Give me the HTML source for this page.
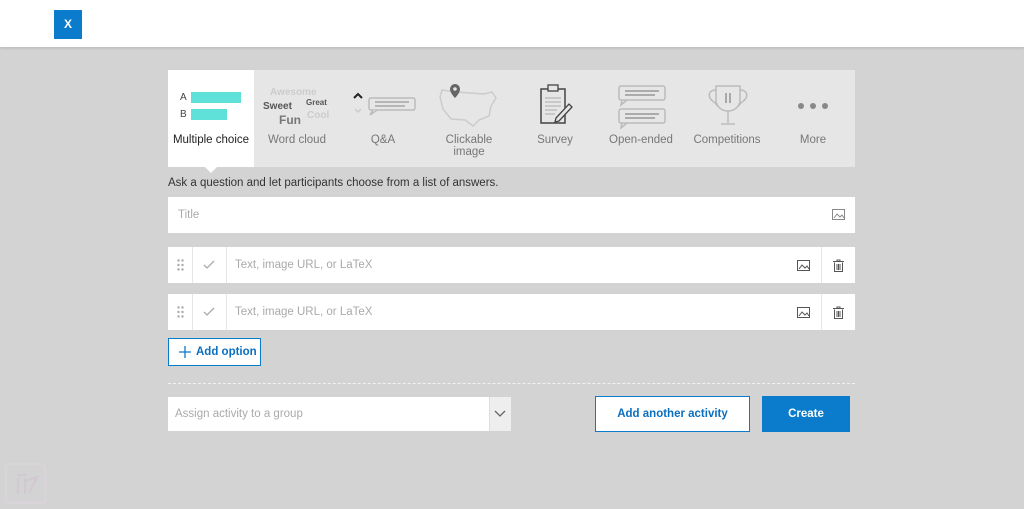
<!DOCTYPE html>
<html><head><style>
*{box-sizing:border-box;margin:0;padding:0}
body{width:1024px;height:509px;background:#d3d3d3;font-family:"Liberation Sans",sans-serif;position:relative;overflow:hidden}
.top{position:absolute;left:0;top:0;width:1024px;height:47px;background:#fff;box-shadow:0 1px 3px rgba(0,0,0,.15)}
.x{position:absolute;left:54px;top:10px;width:28px;height:29px;background:#0b7bcc;color:#fff;font-size:12px;font-weight:bold;text-align:center;line-height:29px}
.tabs{position:absolute;left:168px;top:70px;width:687px;height:97px;background:#e6e6e6}
.tab{position:absolute;top:0;width:86px;height:97px;text-align:center;font-size:11.5px;color:#777}
.tab .l{position:absolute;left:0;right:0;top:64px;line-height:12px}
.sel{background:#fff;color:#222}
.abs{position:absolute}
.desc{position:absolute;left:168px;top:177px;font-size:11.5px;color:#333}
.inp{position:absolute;left:168px;width:687px;height:36px;background:#fff;font-size:11.5px;color:#aaa}
.btn{position:absolute;font-size:11.5px;font-weight:bold;text-align:center}
</style></head><body>
<div class="top"><div class="x">X</div></div>
<div class="tabs">
 <div class="tab sel" style="left:0">
  <div class="abs" style="left:12px;top:22px;font-size:10px;color:#444">A</div>
  <div class="abs" style="left:23px;top:22px;width:50px;height:11px;background:#5fe1da"></div>
  <div class="abs" style="left:12px;top:39px;font-size:10px;color:#444">B</div>
  <div class="abs" style="left:23px;top:39px;width:36px;height:11px;background:#5fe1da"></div>
  <div class="l">Multiple choice</div>
 </div>
 <div class="tab" style="left:86px">
  <div class="abs" style="left:16px;top:17px;font-size:10px;font-weight:bold;color:#ccc">Awesome</div>
  <div class="abs" style="left:9px;top:31px;font-size:10px;font-weight:bold;color:#555">Sweet</div>
  <div class="abs" style="left:52px;top:28px;font-size:8px;font-weight:bold;color:#555">Great</div>
  <div class="abs" style="left:53px;top:40px;font-size:10px;font-weight:bold;color:#ccc">Cool</div>
  <div class="abs" style="left:25px;top:43px;font-size:12px;font-weight:bold;color:#777">Fun</div>
  <div class="l">Word cloud</div>
 </div>
 <div class="tab" style="left:172px">
  <svg class="abs" style="left:8px;top:22px" width="70" height="30"><path d="M6 6l4-4 4 4" stroke="#222" stroke-width="2" fill="none"/><path d="M7 17l3 3 3-3" stroke="#ccc" stroke-width="1.5" fill="none"/><rect x="21" y="6" width="46" height="12" rx="2" fill="none" stroke="#bbb" stroke-width="1.5"/><path d="M25 18l-3 5 7-5" fill="#e6e6e6" stroke="#bbb" stroke-width="1.5"/><path d="M27 10h34M27 14h30" stroke="#999" stroke-width="1.3"/></svg>
  <div class="l">Q&amp;A</div>
 </div>
 <div class="tab" style="left:258px">
  <svg class="abs" style="left:12px;top:12px" width="62" height="46"><path d="M4 8l14 2 28 2 8-2 4 6-5 8-2 10-10 4-6 6-8-6-14-1-8-10-3-12z" fill="none" stroke="#ccc" stroke-width="1.5"/><path d="M17 2a5 5 0 0 1 5 5c0 4-5 9-5 9s-5-5-5-9a5 5 0 0 1 5-5z" fill="#666"/><circle cx="17" cy="7" r="1.8" fill="#e6e6e6"/></svg>
  <div class="l">Clickable<br>image</div>
 </div>
 <div class="tab" style="left:344px">
  <svg class="abs" style="left:26px;top:14px" width="40" height="44"><rect x="3" y="5" width="24" height="34" fill="none" stroke="#444" stroke-width="1.5"/><rect x="10" y="1" width="10" height="6" fill="#e6e6e6" stroke="#444" stroke-width="1.3"/><path d="M7 14h16M7 18h16M7 22h16M7 26h12M7 30h10" stroke="#aaa"/><path d="M18 34l13-14 3 3-13 14-4 1z" fill="#e6e6e6" stroke="#444" stroke-width="1.3"/></svg>
  <div class="l">Survey</div>
 </div>
 <div class="tab" style="left:430px">
  <svg class="abs" style="left:19px;top:15px" width="50" height="44"><rect x="2" y="1" width="46" height="14" rx="2" fill="none" stroke="#bbb" stroke-width="1.5"/><path d="M5 15l-1 5 6-5" fill="none" stroke="#bbb" stroke-width="1.5"/><path d="M8 6h34M8 10h30" stroke="#888" stroke-width="1.3"/><rect x="2" y="24" width="46" height="14" rx="2" fill="none" stroke="#bbb" stroke-width="1.5"/><path d="M5 38l-1 5 6-5" fill="none" stroke="#bbb" stroke-width="1.5"/><path d="M8 29h34M8 33h30" stroke="#888" stroke-width="1.3"/></svg>
  <div class="l">Open-ended</div>
 </div>
 <div class="tab" style="left:516px">
  <svg class="abs" style="left:22px;top:14px" width="44" height="44"><path d="M10 2h24v14c0 6-5 11-12 11s-12-5-12-11z" fill="none" stroke="#bbb" stroke-width="1.5"/><path d="M10 6c-6 0-8 4-6 8s6 4 7 8M34 6c6 0 8 4 6 8s-6 4-7 8M22 27v12M15 40h14" fill="none" stroke="#bbb" stroke-width="1.5"/><path d="M20 9v10M24 9v10" stroke="#888" stroke-width="1.3"/></svg>
  <div class="l">Competitions</div>
 </div>
 <div class="tab" style="left:602px">
  <svg class="abs" style="left:26px;top:31px" width="36" height="10"><circle cx="5" cy="5" r="3" fill="#888"/><circle cx="17" cy="5" r="3" fill="#888"/><circle cx="29" cy="5" r="3" fill="#888"/></svg>
  <div class="l">More</div>
 </div>
</div>
<div class="abs" style="left:205px;top:167px;width:0;height:0;border-left:6px solid transparent;border-right:6px solid transparent;border-top:6px solid #fff"></div>
<div class="desc">Ask a question and let participants choose from a list of answers.</div>
<div class="inp" style="top:197px"><span class="abs" style="left:10px;top:12px">Title</span>
 <svg class="abs" style="left:664px;top:12px" width="13" height="11"><rect x=".5" y=".5" width="12" height="10" fill="none" stroke="#888"/><path d="M2 9l3-4 3 3 2-2 2 3" fill="none" stroke="#888"/></svg></div>
<div class="inp" style="top:247px">
 <svg class="abs" style="left:9px;top:12px" width="7" height="12"><g fill="#aaa"><circle cx="1.5" cy="1.5" r="1.2"/><circle cx="5.5" cy="1.5" r="1.2"/><circle cx="1.5" cy="6" r="1.2"/><circle cx="5.5" cy="6" r="1.2"/><circle cx="1.5" cy="10.5" r="1.2"/><circle cx="5.5" cy="10.5" r="1.2"/></g></svg>
 <div class="abs" style="left:24px;top:0;width:1px;height:36px;background:#e6e6e6"></div>
 <svg class="abs" style="left:35px;top:13px" width="12" height="10"><path d="M1 5l3 3 7-7" fill="none" stroke="#aaa" stroke-width="1.3"/></svg>
 <div class="abs" style="left:58px;top:0;width:1px;height:36px;background:#e6e6e6"></div>
 <span class="abs" style="left:67px;top:12px">Text, image URL, or LaTeX</span>
 <svg class="abs" style="left:629px;top:13px" width="13" height="11"><rect x=".5" y=".5" width="12" height="10" fill="none" stroke="#555"/><path d="M2 9l3-4 3 3 2-2 2 3" fill="none" stroke="#555"/></svg>
 <div class="abs" style="left:653px;top:0;width:1px;height:36px;background:#e6e6e6"></div>
 <svg class="abs" style="left:665px;top:12px" width="11" height="13"><path d="M0 2.5h11M4 2.5V1h3v1.5M1.5 3.5v9h8v-9M4 5v6M5.5 5v6M7 5v6" fill="none" stroke="#555"/></svg>
</div>
<div class="inp" style="top:294px">
 <svg class="abs" style="left:9px;top:12px" width="7" height="12"><g fill="#aaa"><circle cx="1.5" cy="1.5" r="1.2"/><circle cx="5.5" cy="1.5" r="1.2"/><circle cx="1.5" cy="6" r="1.2"/><circle cx="5.5" cy="6" r="1.2"/><circle cx="1.5" cy="10.5" r="1.2"/><circle cx="5.5" cy="10.5" r="1.2"/></g></svg>
 <div class="abs" style="left:24px;top:0;width:1px;height:36px;background:#e6e6e6"></div>
 <svg class="abs" style="left:35px;top:13px" width="12" height="10"><path d="M1 5l3 3 7-7" fill="none" stroke="#aaa" stroke-width="1.3"/></svg>
 <div class="abs" style="left:58px;top:0;width:1px;height:36px;background:#e6e6e6"></div>
 <span class="abs" style="left:67px;top:12px">Text, image URL, or LaTeX</span>
 <svg class="abs" style="left:629px;top:13px" width="13" height="11"><rect x=".5" y=".5" width="12" height="10" fill="none" stroke="#555"/><path d="M2 9l3-4 3 3 2-2 2 3" fill="none" stroke="#555"/></svg>
 <div class="abs" style="left:653px;top:0;width:1px;height:36px;background:#e6e6e6"></div>
 <svg class="abs" style="left:665px;top:12px" width="11" height="13"><path d="M0 2.5h11M4 2.5V1h3v1.5M1.5 3.5v9h8v-9M4 5v6M5.5 5v6M7 5v6" fill="none" stroke="#555"/></svg>
</div>
<div class="btn" style="left:168px;top:338px;width:93px;height:28px;background:#fff;border:1px solid #0b7bcc;color:#0b6fbf;line-height:26px;text-align:left;padding-left:27px">Add option
 <svg class="abs" style="left:10px;top:7px" width="12" height="12"><path d="M6 0v12M0 6h12" stroke="#0b7bcc" stroke-width="1.3"/></svg></div>
<div class="abs" style="left:168px;top:383px;width:687px;border-top:1px dashed #f2f2f2"></div>
<div class="abs" style="left:168px;top:397px;width:343px;height:34px;background:#fff;font-size:11.5px;color:#aaa">
 <span class="abs" style="left:7px;top:11px">Assign activity to a group</span>
 <div class="abs" style="left:321px;top:0;width:22px;height:34px;background:#eee;border-left:1px solid #ddd"></div>
 <svg class="abs" style="left:326px;top:13px" width="12" height="8"><path d="M1 1l5 5 5-5" fill="none" stroke="#666" stroke-width="1.3"/></svg>
</div>
<div class="btn" style="left:595px;top:396px;width:155px;height:36px;background:#fff;border:1px solid #0b7bcc;color:#0b6fbf;line-height:34px">Add another activity</div>
<div class="btn" style="left:762px;top:396px;width:88px;height:36px;background:#0b7bcc;color:#fff;line-height:36px">Create</div>
<svg class="abs" style="left:5px;top:463px" width="41" height="41"><rect x="1" y="1" width="39" height="39" rx="3" fill="none" stroke="#dbd5db" stroke-width="1.5"/><path d="M13 12h8M13 15v16M20 15v16M20 18l12-4-8 16" fill="none" stroke="#d2c8d2" stroke-width="2"/></svg>
</body></html>
